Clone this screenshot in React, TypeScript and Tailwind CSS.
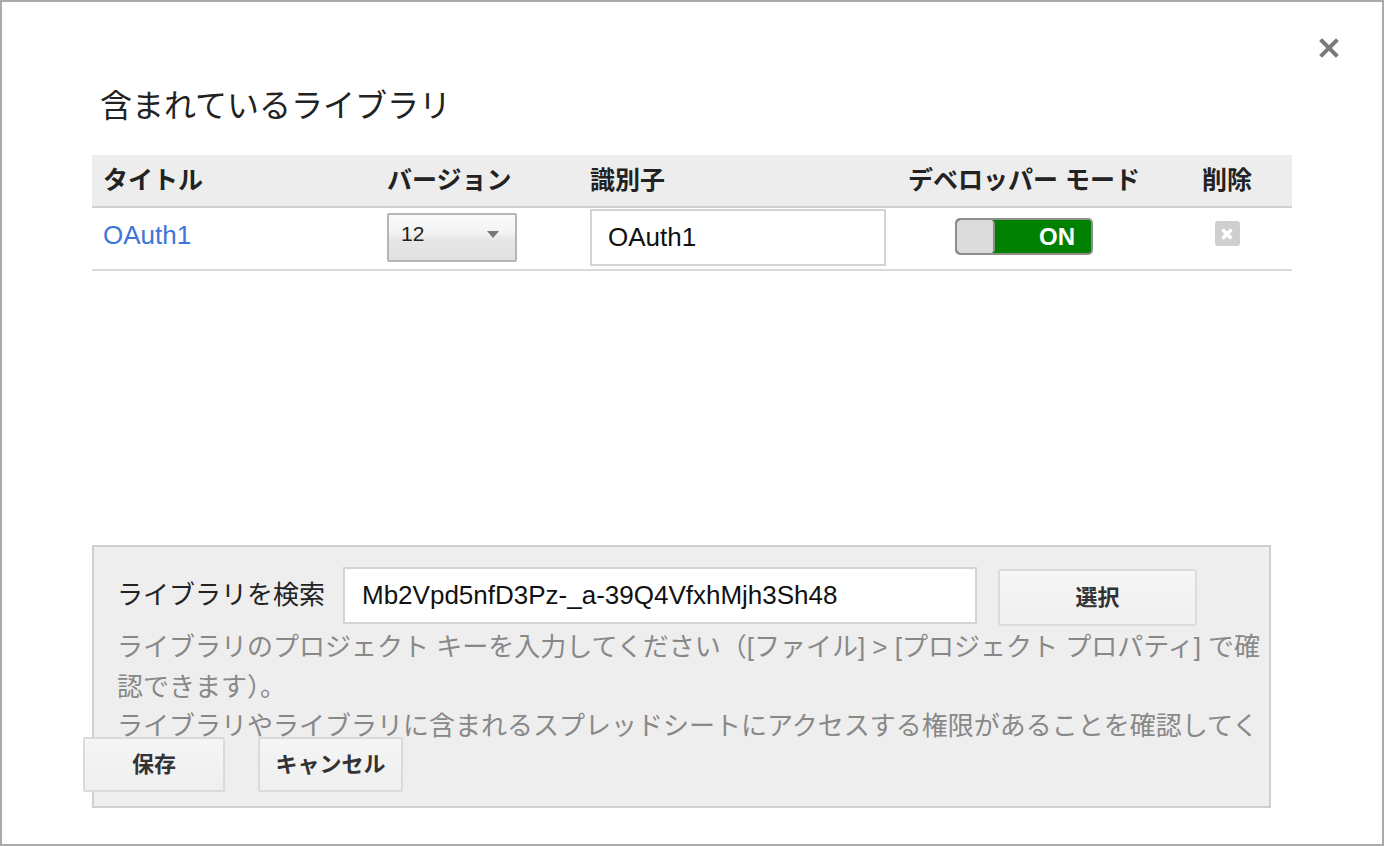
import React from "react";

const font = "font-['Liberation_Sans','Noto_Sans_CJK_JP',sans-serif]";

function CloseIcon() {
  return (
    <svg width="22" height="22" viewBox="0 0 22 22" className="block">
      <path d="M4 4 L18 18 M18 4 L4 18" stroke="#7a7a7a" strokeWidth="4" strokeLinecap="square" />
    </svg>
  );
}

function VersionSelect() {
  return (
    <div className="flex h-[49px] w-[130px] items-center justify-between rounded-[2px] border-2 border-[#b5b5b5] bg-[linear-gradient(#fafafa_0%,#f3f3f3_40%,#e6e6e6_55%,#e1e1e1_100%)] pl-[12px] pr-[16px] pb-[7px]">
      <span className="text-[21px] text-[#222]">12</span>
      <svg width="12" height="7" viewBox="0 0 12 7" className="block">
        <path d="M0 0 L12 0 L6 7 Z" fill="#777" />
      </svg>
    </div>
  );
}

function DevToggle() {
  return (
    <div className="flex h-[37px] w-[138px] overflow-hidden rounded-[5px] border-2 border-[#8e8e8e] bg-[#008000]">
      <div className="h-full w-[38px] rounded-[4px] border-r-2 border-[#8e8e8e] bg-[#dcdcdc]" />
      <div className="flex flex-1 items-center justify-center pl-[28px] text-[24px] font-bold text-white">ON</div>
    </div>
  );
}

function DeleteIcon() {
  return (
    <div className="flex h-[25px] w-[25px] items-center justify-center rounded-[3px] bg-[#cfcfcf]">
      <svg width="14" height="14" viewBox="0 0 14 14" className="block">
        <path d="M2.5 2.5 L11.5 11.5 M11.5 2.5 L2.5 11.5" stroke="#fff" strokeWidth="3.6" />
      </svg>
    </div>
  );
}

export default function App() {
  return (
    <div className={`relative h-[846px] w-[1384px] overflow-hidden border-2 border-[#aaa] bg-white ${font}`}>
      <button className="absolute right-[42px] top-[35px]">
        <CloseIcon />
      </button>

      <div className="pl-[90px] pt-[80px]">
        <h1 className="pl-[8px] text-[32px] font-normal leading-[48px] text-[#222]">含まれているライブラリ</h1>

        {/* library table */}
        <div className="mt-[25px] w-[1200px]">
          <div className="grid h-[53px] grid-cols-[284px_203px_318px_254px_141px] items-center border-b-2 border-[#d0d0d0] bg-[#ededed] text-[25px] font-bold text-[#222]">
            <div className="pl-[11px]">タイトル</div>
            <div className="pl-[11px]">バージョン</div>
            <div className="pl-[11px]">識別子</div>
            <div className="text-center">デベロッパー モード</div>
            <div className="pl-[11px] text-center">削除</div>
          </div>
          <div className="grid h-[63px] grid-cols-[284px_203px_318px_254px_141px] items-start border-b-2 border-[#dadada]">
            <div className="pl-[11px] pt-[12px]">
              <a className="text-[26px] leading-[30px] text-[#3e76d8]">OAuth1</a>
            </div>
            <div className="pl-[11px] pt-[5px]">
              <VersionSelect />
            </div>
            <div className="pl-[11px] pt-[1px]">
              <div className="flex h-[57px] w-[296px] items-center border-2 border-[#d4d4d4] bg-white pl-[16px] text-[26px] text-[#111]">
                OAuth1
              </div>
            </div>
            <div className="flex justify-center pt-[10px]">
              <DevToggle />
            </div>
            <div className="flex justify-center pl-[11px] pt-[13px]">
              <DeleteIcon />
            </div>
          </div>
        </div>

        {/* search panel with footer buttons on top */}
        <div className="relative mt-[274px]">
          <div className="h-[263px] w-[1179px] border-2 border-[#cfcfcf] bg-[#eeeeee] pl-[23px] pt-[20px]">
            <div className="flex items-start">
              <label className="flex h-[57px] w-[226px] items-center text-[26px] text-[#222]">ライブラリを検索</label>
              <div className="flex h-[57px] w-[634px] items-center border-2 border-[#d4d4d4] bg-white pl-[17px] text-[26px] text-[#111]">
                Mb2Vpd5nfD3Pz-_a-39Q4VfxhMjh3Sh48
              </div>
              <button className="ml-[21px] mt-[2px] h-[57px] w-[199px] rounded-[3px] border-2 border-[#dcdcdc] bg-[linear-gradient(#f6f6f6,#f0f0f0)] text-[22px] font-bold text-[#333]">
                選択
              </button>
            </div>
            <div className="mt-[2px] whitespace-nowrap text-[26px] leading-[39.5px] text-[#888]">
              <div>ライブラリのプロジェクト キーを入力してください（[ファイル] &gt; [プロジェクト プロパティ] で確</div>
              <div>認できます）。</div>
              <div>ライブラリやライブラリに含まれるスプレッドシートにアクセスする権限があることを確認してく</div>
            </div>
          </div>

          <div className="absolute left-[-9px] top-[192px] flex gap-[33px]">
            <button className="h-[55px] w-[142px] rounded-[2px] border-2 border-[#dadada] bg-[linear-gradient(#f5f5f5,#efefef)] text-[22px] font-bold text-[#333]">
              保存
            </button>
            <button className="h-[55px] w-[145px] rounded-[2px] border-2 border-[#dadada] bg-[linear-gradient(#f5f5f5,#efefef)] text-[22px] font-bold text-[#333]">
              キャンセル
            </button>
          </div>
        </div>
      </div>
    </div>
  );
}
